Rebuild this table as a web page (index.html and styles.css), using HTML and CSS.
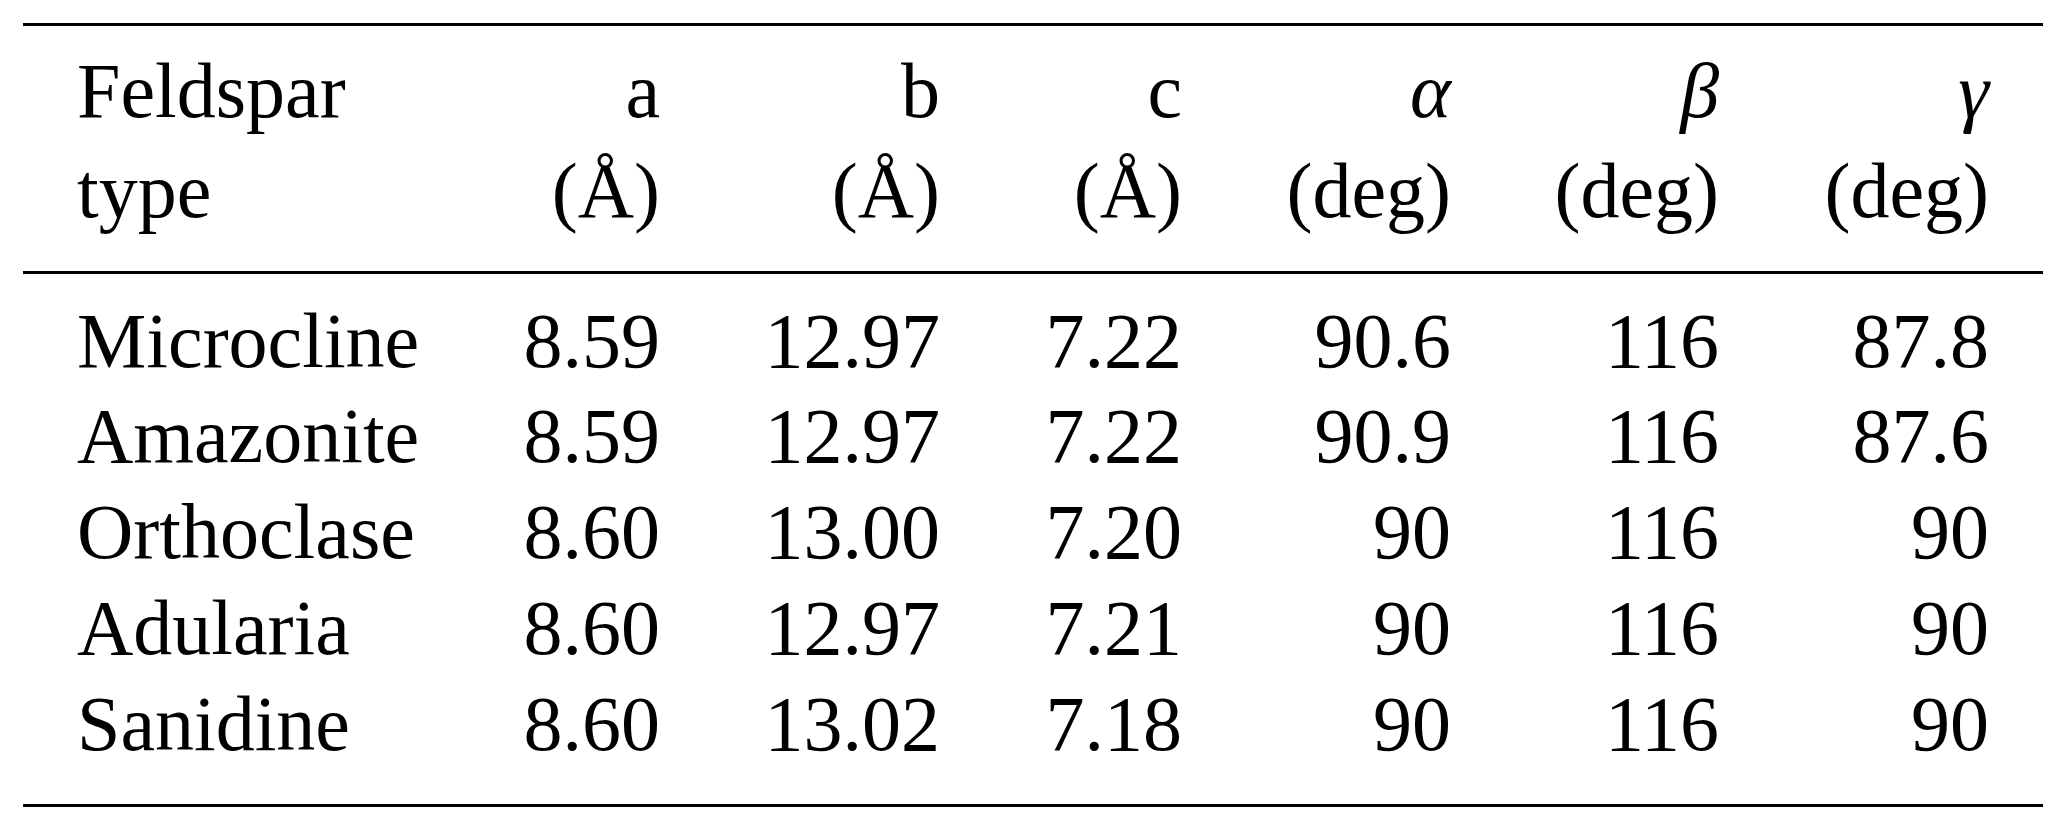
FILE: index.html
```html
<!DOCTYPE html>
<html lang="en">
<head>
<meta charset="utf-8">
<title>Feldspar lattice parameters</title>
<link rel="stylesheet" href="styles.css">
</head>
<body>
<table class="lattice">
  <colgroup>
    <col class="c-name">
    <col class="c-a">
    <col class="c-b">
    <col class="c-c">
    <col class="c-al">
    <col class="c-be">
    <col class="c-ga">
  </colgroup>
  <thead>
    <tr>
      <th class="name">Feldspar<br>type</th>
      <th>a<br>(Å)</th>
      <th>b<br>(Å)</th>
      <th>c<br>(Å)</th>
      <th><span class="greek">α</span><br>(deg)</th>
      <th><span class="greek">β</span><br>(deg)</th>
      <th class="last"><span class="greek">γ</span><br>(deg)</th>
    </tr>
  </thead>
  <tbody>
    <tr class="first">
      <td class="name">Microcline</td><td>8.59</td><td>12.97</td><td>7.22</td><td>90.6</td><td>116</td><td class="last">87.8</td>
    </tr>
    <tr>
      <td class="name">Amazonite</td><td>8.59</td><td>12.97</td><td>7.22</td><td>90.9</td><td>116</td><td class="last">87.6</td>
    </tr>
    <tr>
      <td class="name">Orthoclase</td><td>8.60</td><td>13.00</td><td>7.20</td><td>90</td><td>116</td><td class="last">90</td>
    </tr>
    <tr>
      <td class="name">Adularia</td><td>8.60</td><td>12.97</td><td>7.21</td><td>90</td><td>116</td><td class="last">90</td>
    </tr>
    <tr class="final">
      <td class="name">Sanidine</td><td>8.60</td><td>13.02</td><td>7.18</td><td>90</td><td>116</td><td class="last">90</td>
    </tr>
  </tbody>
</table>
</body>
</html>
```

FILE: styles.css
```css
html, body {
  margin: 0;
  padding: 0;
  background: #ffffff;
}

body {
  padding: 23px 0 0 23px;
}

.lattice {
  width: 2020px;
  table-layout: fixed;
  border-collapse: collapse;
  border-top: 3px solid #000;
  border-bottom: 3px solid #000;
  font-family: "Liberation Serif", "Times New Roman", serif;
  font-size: 78px;
  color: #000;
}

.c-name { width: 427px; }
.c-a { width: 210px; }
.c-b { width: 280px; }
.c-c { width: 242px; }
.c-al { width: 269px; }
.c-be { width: 268px; }
.c-ga { width: 324px; }

.lattice th,
.lattice td {
  padding: 0;
  text-align: right;
  font-weight: normal;
  white-space: nowrap;
  vertical-align: top;
}

.lattice thead tr {
  border-bottom: 3px solid #000;
}

.lattice th {
  line-height: 100px;
  padding-top: 14.6px;
  padding-bottom: 30.4px;
}

.lattice td {
  line-height: 95.75px;
}

.lattice .name {
  text-align: left;
  padding-left: 54px;
}

.lattice .last {
  padding-right: 54px;
}

.lattice tr.first td {
  padding-top: 18.6px;
}

.lattice tr.final td {
  padding-bottom: 32.6px;
}

.greek {
  font-style: italic;
}
```
